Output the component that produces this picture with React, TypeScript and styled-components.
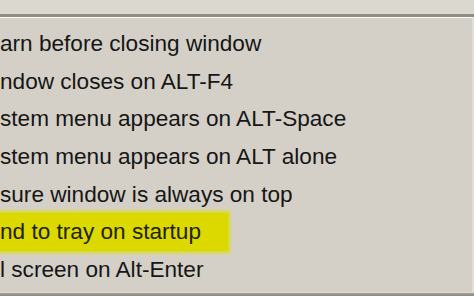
import React from "react"
import styled, { createGlobalStyle } from "styled-components"

const GlobalStyle = createGlobalStyle`
  html, body {
    margin: 0;
    padding: 0;
    background: #d4d0c8;
    overflow: hidden;
  }
`

const Window = styled.div`
  width: 474px;
  height: 296px;
  display: flex;
  flex-direction: column;
  background: #d4d0c8;
  font-family: "Liberation Sans", Arial, sans-serif;
  overflow: hidden;
`

const TopBand = styled.div`
  height: 14px;
  flex: none;
  background: #dbd8cf;
  border-bottom: 3px solid #8e8c86;
`

const Panel = styled.div`
  flex: 1;
  min-height: 0;
  border-top: 1px solid #fbfbf8;
  border-right: 2px solid #e2dfd8;
  border-bottom: 1px solid #dedbd4;
  padding-top: 7px;
  background: #d4d0c8;
`

const BottomEdge = styled.div`
  height: 3px;
  flex: none;
  background: linear-gradient(#a4a19b, #8c8a84);
`

const OptionList = styled.ul`
  list-style: none;
  margin: 0;
  padding: 0;
`

const Option = styled.li`
  height: 37.7px;
  line-height: 37.7px;
  font-size: 22.6px;
  color: #161616;
  white-space: nowrap;
`

const Label = styled.span<{ $highlighted?: boolean }>`
  display: inline-block;
  padding-right: ${p => (p.$highlighted ? "27px" : "0")};
  background: ${p => (p.$highlighted ? "#dbd900" : "transparent")};
  box-shadow: ${p => (p.$highlighted ? "0 0 3px 2px #dedc20" : "none")};
  color: ${p => (p.$highlighted ? "#22220a" : "inherit")};
`

// the left edge of the dialog is cropped, so only the visible part of each label is shown
const options = [
  { text: "arn before closing window" },
  { text: "ndow closes on ALT-F4" },
  { text: "stem menu appears on ALT-Space" },
  { text: "stem menu appears on ALT alone" },
  { text: "sure window is always on top" },
  { text: "nd to tray on startup", highlighted: true },
  { text: "l screen on Alt-Enter" },
]

const App = () => {
  return (
    <>
      <GlobalStyle />
      <Window>
        <TopBand />
        <Panel>
          <OptionList>
            {options.map(o => (
              <Option key={o.text}>
                <Label $highlighted={o.highlighted}>{o.text}</Label>
              </Option>
            ))}
          </OptionList>
        </Panel>
        <BottomEdge />
      </Window>
    </>
  )
}

export default App
